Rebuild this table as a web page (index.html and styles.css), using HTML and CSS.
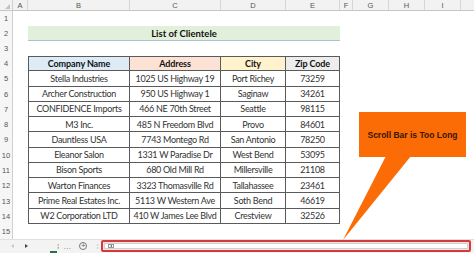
FILE: index.html
```html
<!DOCTYPE html>
<html>
<head>
<meta charset="utf-8">
<link rel="stylesheet" href="styles.css">
</head>
<body>
<div class="sheet">
  <div class="row hdr">
    <div class="rh corner"><span class="tri"></span></div>
    <div class="ch ca">A</div><div class="ch cb">B</div><div class="ch cc">C</div><div class="ch cd">D</div><div class="ch ce">E</div><div class="ch cf">F</div><div class="ch cg">G</div><div class="ch cg">H</div><div class="ch cg">I</div><div class="ch rest"></div>
  </div>
  <div class="row"><div class="rh">1</div></div>
  <div class="row"><div class="rh">2</div><div class="ca"></div><div class="title">List of Clientele</div></div>
  <div class="row"><div class="rh">3</div></div>
  <div class="row tr first"><div class="rh">4</div><div class="ca"></div><div class="c cb th b1">Company Name</div><div class="c cc th b2">Address</div><div class="c cd th b3">City</div><div class="c ce th b4">Zip Code</div></div>
  <div class="row tr"><div class="rh">5</div><div class="ca"></div><div class="c cb">Stella Industries</div><div class="c cc">1025 US Highway 19</div><div class="c cd">Port Richey</div><div class="c ce">73259</div></div>
  <div class="row tr"><div class="rh">6</div><div class="ca"></div><div class="c cb">Archer Construction</div><div class="c cc">950 US Highway 1</div><div class="c cd">Saginaw</div><div class="c ce">34261</div></div>
  <div class="row tr"><div class="rh">7</div><div class="ca"></div><div class="c cb">CONFIDENCE Imports</div><div class="c cc">466 NE 70th Street</div><div class="c cd">Seattle</div><div class="c ce">98115</div></div>
  <div class="row tr"><div class="rh">8</div><div class="ca"></div><div class="c cb">M3 Inc.</div><div class="c cc">485 N Freedom Blvd</div><div class="c cd">Provo</div><div class="c ce">84601</div></div>
  <div class="row tr"><div class="rh">9</div><div class="ca"></div><div class="c cb">Dauntless USA</div><div class="c cc">7743 Montego Rd</div><div class="c cd">San Antonio</div><div class="c ce">78250</div></div>
  <div class="row tr"><div class="rh">10</div><div class="ca"></div><div class="c cb">Eleanor Salon</div><div class="c cc">1331 W Paradise Dr</div><div class="c cd">West Bend</div><div class="c ce">53095</div></div>
  <div class="row tr"><div class="rh">11</div><div class="ca"></div><div class="c cb">Bison Sports</div><div class="c cc">680 Old Mill Rd</div><div class="c cd">Millersville</div><div class="c ce">21108</div></div>
  <div class="row tr"><div class="rh">12</div><div class="ca"></div><div class="c cb">Warton Finances</div><div class="c cc">3323 Thomasville Rd</div><div class="c cd">Tallahassee</div><div class="c ce">23461</div></div>
  <div class="row tr"><div class="rh">13</div><div class="ca"></div><div class="c cb">Prime Real Estates Inc.</div><div class="c cc">5113 W Western Ave</div><div class="c cd">Soth Bend</div><div class="c ce">46619</div></div>
  <div class="row tr"><div class="rh">14</div><div class="ca"></div><div class="c cb">W2 Corporation LTD</div><div class="c cc">410 W James Lee Blvd</div><div class="c cd">Crestview</div><div class="c ce">32526</div></div>
  <div class="row"><div class="rh">15</div></div>

  <div class="tabbar">
    <div class="nav"><span class="arr l"></span><span class="arr r"></span></div>
    <div class="tabs"><span class="active"></span><span class="dots">⁞</span><span class="ell">…</span><span class="plus">+</span><span class="sep">⁞</span></div>
    <div class="hscroll"><div class="track"><span class="btn"><span class="barr"></span></span></div></div>
  </div>

  <div class="callout">Scroll Bar is Too Long</div>
  <svg class="tail" width="474" height="253" viewBox="0 0 474 253"><polygon points="386,156 411,156 343,240" fill="#fb6c07"/></svg>
</div>
</body>
</html>
```
FILE: styles.css
```css
* { box-sizing: border-box; margin: 0; padding: 0; }
html, body { width: 474px; height: 253px; overflow: hidden; background: #fff; }
body { font-family: Lato, "Open Sans", sans-serif; color: #333; }
.sheet { position: relative; width: 474px; height: 253px; }
.row { display: flex; height: 15px; }
.row.tr { height: 15.27px; }
.row.hdr { height: 11px; background: #f2f2f2; border-bottom: 1px solid #c6c6c6; }
.rh { width: 13px; flex: none; font: 7.5px "Liberation Sans", sans-serif; color: #555; display: flex; align-items: center; justify-content: center; background: #f6f6f6; border-right: 1px solid #d0d0d0; }
.rh.corner { background: #f2f2f2; position: relative; }
.tri { width: 0; height: 0; border-left: 5px solid transparent; border-bottom: 5px solid #c2c2c2; position: absolute; right: 2px; bottom: 1px; }
.ch { font: 7.5px "Liberation Sans", sans-serif; color: #555; display: flex; align-items: center; justify-content: center; border-right: 1px solid #d6d6d6; flex: none; }
.ca { width: 15px; flex: none; }
.cb { width: 102px; flex: none; }
.cc { width: 91px; flex: none; }
.cd { width: 65px; flex: none; }
.ce { width: 54px; flex: none; }
.cf { width: 13px; }
.cg { width: 36px; }
.ch.rest { flex: 1; border-right: 0; }
.title { width: 312px; background: #e2efda; border-bottom: 1px solid #a9c0d9; font-weight: 700; font-size: 9.5px; color: #111; display: flex; align-items: center; justify-content: center; }
.c { display: flex; align-items: center; justify-content: center; font-size: 9px; letter-spacing: -0.3px; color: #333; white-space: nowrap; border-right: 1px solid #5a5a5a; border-bottom: 1px solid #5a5a5a; }
.c.cb { border-left: 1px solid #5a5a5a; }
.first .c { border-top: 1px solid #5a5a5a; }
.th { font-weight: 700; color: #111; letter-spacing: -0.1px; }
.b1 { background: #ddebf7; }
.b2 { background: #fbe2d5; }
.b3 { background: #fff2cc; }
.b4 { background: #ededed; }

.tabbar { display: flex; align-items: center; height: 14px; background: #f3f3f3; border-top: 1px solid #e0e0e0; }
.nav { width: 44px; display: flex; align-items: center; gap: 11px; padding-left: 11px; }
.arr { width: 0; height: 0; border-top: 2px solid transparent; border-bottom: 2px solid transparent; }
.arr.l { border-right: 3px solid #c8c8c8; }
.arr.r { border-left: 3px solid #444; }
.tabs { position: relative; width: 56px; height: 100%; display: flex; align-items: center; font: 8px "Liberation Sans", sans-serif; color: #666; }
.active { position: absolute; left: 6px; bottom: -1px; width: 7px; height: 3px; background: #217346; }
.dots { margin-left: 13px; color: #777; }
.ell { margin-left: 4px; color: #666; }
.plus { margin-left: 8px; width: 8px; height: 8px; border: 1px solid #777; border-radius: 50%; font-size: 7px; line-height: 6px; text-align: center; color: #555; }
.sep { margin-left: 9px; color: #bbb; }
.hscroll { margin-left: 1px; width: 370px; height: 12px; border: 2px solid #d23b3b; border-radius: 2px; background: #f8e0e0; padding: 1px; }
.track { height: 100%; background: #fff; border: 1px solid #cfcfcf; display: flex; align-items: center; }
.btn { width: 6px; height: 100%; margin-left: 3px; display: flex; align-items: center; justify-content: center; border: 1px solid #999; background: #fff; }
.barr { width: 0; height: 0; border-top: 1.5px solid transparent; border-bottom: 1.5px solid transparent; border-right: 2px solid #555; }

.callout { position: absolute; left: 359px; top: 112px; width: 107px; height: 45px; background: #fb6c07; color: #3a1500; font: 700 8.5px "Liberation Sans", Arial, sans-serif; display: flex; align-items: center; justify-content: center; }
.tail { position: absolute; left: 0; top: 0; pointer-events: none; }
```
